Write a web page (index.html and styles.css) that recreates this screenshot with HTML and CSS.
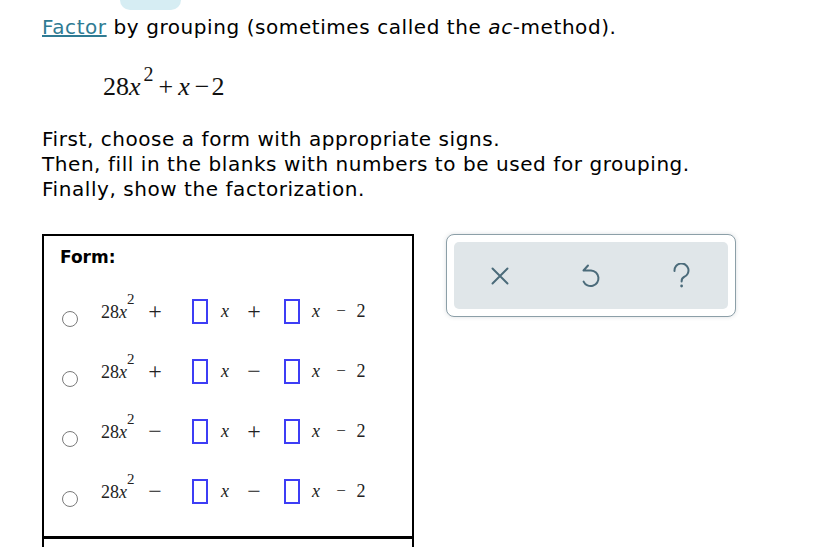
FILE: index.html
```html
<!DOCTYPE html>
<html>
<head>
<meta charset="utf-8">
<link rel="stylesheet" href="styles.css">
</head>
<body>
<div class="page">
  <div class="tab"></div>
  <p class="lead"><a class="link" href="#">Factor</a> by grouping (sometimes called the <i>ac</i>-method).</p>
  <div class="poly"><span>28</span><i class="pvar">x</i><span class="psup">2</span><span class="pop">+</span><i class="pvar">x</i><span class="pop pop-last">−</span><span>2</span></div>
  <p class="steps">First, choose a form with appropriate signs.<br>Then, fill in the blanks with numbers to be used for grouping.<br>Finally, show the factorization.</p>

  <div class="work">
    <div class="formcol">
      <div class="formbox">
        <div class="formtitle">Form:</div>
        <div class="row">
          <span class="radio"></span>
          <span class="term">28<i>x</i><span class="sup">2</span></span>
          <span class="op">+</span>
          <span class="blank"></span>
          <span class="xv"><i>x</i></span>
          <span class="op2">+</span>
          <span class="blank"></span>
          <span class="xv2"><i>x</i></span>
          <span class="minus">−</span>
          <span class="const">2</span>
        </div>
        <div class="row">
          <span class="radio"></span>
          <span class="term">28<i>x</i><span class="sup">2</span></span>
          <span class="op">+</span>
          <span class="blank"></span>
          <span class="xv"><i>x</i></span>
          <span class="op2">−</span>
          <span class="blank"></span>
          <span class="xv2"><i>x</i></span>
          <span class="minus">−</span>
          <span class="const">2</span>
        </div>
        <div class="row">
          <span class="radio"></span>
          <span class="term">28<i>x</i><span class="sup">2</span></span>
          <span class="op">−</span>
          <span class="blank"></span>
          <span class="xv"><i>x</i></span>
          <span class="op2">+</span>
          <span class="blank"></span>
          <span class="xv2"><i>x</i></span>
          <span class="minus">−</span>
          <span class="const">2</span>
        </div>
        <div class="row">
          <span class="radio"></span>
          <span class="term">28<i>x</i><span class="sup">2</span></span>
          <span class="op">−</span>
          <span class="blank"></span>
          <span class="xv"><i>x</i></span>
          <span class="op2">−</span>
          <span class="blank"></span>
          <span class="xv2"><i>x</i></span>
          <span class="minus">−</span>
          <span class="const">2</span>
        </div>
      </div>
      <div class="nextbox"></div>
    </div>

    <div class="tools">
      <div class="toolbar">
        <div class="tool">
          <svg width="18" height="18" viewBox="0 0 18 18"><path d="M1.5 1.5 L16.5 16.5 M16.5 1.5 L1.5 16.5" stroke="#4b6b7a" stroke-width="2" fill="none" stroke-linecap="round"/></svg>
        </div>
        <div class="tool">
          <svg width="20" height="26" viewBox="0 0 20 26"><path d="M7 2.5 L2.5 7.5 L10 7.5 A7.8 7.8 0 1 1 2.6 18.6" stroke="#4b6b7a" stroke-width="2" fill="none" stroke-linecap="round" stroke-linejoin="round"/></svg>
        </div>
        <div class="tool">
          <svg width="20" height="26" viewBox="0 0 20 26"><path d="M2.5 8 A7 7 0 1 1 12 14 C10 15 9.6 16.2 9.6 18.5" stroke="#4b6b7a" stroke-width="2" fill="none" stroke-linecap="round"/><circle cx="9.6" cy="23" r="1.4" fill="#4b6b7a"/></svg>
        </div>
      </div>
    </div>
  </div>
</div>
</body>
</html>
```
FILE: styles.css
```css
html, body {
  margin: 0;
  padding: 0;
  background: #ffffff;
}
body {
  font-family: "DejaVu Sans", Verdana, sans-serif;
  color: #000;
  overflow: hidden;
  height: 547px;
}
.page {
  padding-left: 42px;
}
.tab {
  width: 61px;
  height: 10px;
  margin-left: 78px;
  background: #d6edf3;
  border-radius: 0 0 10px 10px;
}
.lead {
  margin: 5px 0 0 0;
  font-size: 20px;
  letter-spacing: 0.57px;
  line-height: 25px;
}
.link {
  color: #2f7b93;
  text-decoration: underline;
}
.poly {
  margin: 32px 0 0 61px;
  font-family: "Liberation Serif", "Times New Roman", serif;
  font-size: 26px;
  line-height: 30px;
  color: #111;
}
.pvar {
  margin-right: 3px;
}
.psup {
  font-size: 20px;
  vertical-align: 14px;
  line-height: 0;
}
.pop {
  margin: 0 5px;
}
.pop-last {
  margin: 0 2px;
}
.steps {
  margin: 25px 0 0 0;
  font-size: 20px;
  letter-spacing: 0.56px;
  line-height: 25px;
}
.work {
  display: flex;
  gap: 32px;
  margin-top: 32px;
  align-items: flex-start;
}
.formcol {
  width: 372px;
  display: flex;
  flex-direction: column;
}
.formbox {
  border: 2px solid #000;
  border-bottom-width: 3px;
  padding: 10px 0 15px 16px;
}
.nextbox {
  height: 40px;
  border-left: 2px solid #000;
  border-right: 2px solid #000;
}
.formtitle {
  font-weight: bold;
  font-size: 17px;
  line-height: 22px;
  margin-bottom: 13px;
}
.row {
  height: 60px;
  display: flex;
  align-items: center;
  font-family: "Liberation Serif", "Times New Roman", serif;
  color: #222;
}
.radio {
  width: 14px;
  height: 14px;
  border: 1.6px solid #7a7a7a;
  border-radius: 50%;
  margin: 15px 23px 0 2px;
  flex: none;
}
.term {
  width: 38px;
  font-size: 18px;
  line-height: 24px;
  flex: none;
}
.sup {
  font-size: 15px;
  vertical-align: 14px;
  line-height: 0;
}
.op, .op2 {
  font-size: 24px;
  line-height: 28px;
  text-align: center;
  flex: none;
}
.op {
  width: 32px;
  margin-right: 21px;
}
.op2 {
  width: 24px;
  margin-right: 18px;
}
.blank {
  width: 12px;
  height: 21px;
  border: 2px solid #3d3df5;
  flex: none;
}
.xv, .xv2 {
  font-size: 18px;
  line-height: 24px;
  text-align: center;
  flex: none;
}
.xv {
  width: 34px;
}
.xv2 {
  width: 32px;
}
.minus {
  width: 18px;
  font-size: 17px;
  line-height: 24px;
  text-align: center;
  flex: none;
}
.const {
  width: 22px;
  font-size: 18px;
  line-height: 24px;
  text-align: center;
  flex: none;
}
.tools {
  width: 274px;
  padding: 7px;
  border: 1px solid #8c9fa8;
  border-radius: 8px;
  box-shadow: 0 0 4px rgba(60, 80, 90, 0.18);
  background: #fff;
}
.toolbar {
  height: 67px;
  background: #e0e6e9;
  border-radius: 5px;
  display: flex;
}
.tool {
  flex: 1;
  display: flex;
  align-items: center;
  justify-content: center;
}
```
